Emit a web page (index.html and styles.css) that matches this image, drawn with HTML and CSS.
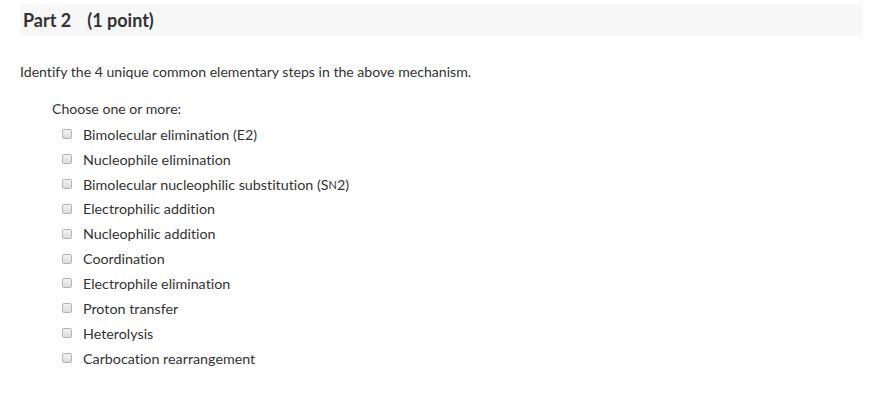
FILE: index.html
```html
<!DOCTYPE html>
<html>
<head>
<meta charset="utf-8">
<link rel="stylesheet" href="styles.css">
</head>
<body>
<div class="page">
  <div class="part-header"><span class="part">Part 2</span><span class="points">(1 point)</span></div>
  <p class="question">Identify the 4 unique common elementary steps in the above mechanism.</p>
  <div class="choices">
    <div class="prompt">Choose one or more:</div>
    <ul class="options">
      <li><span class="box"></span>Bimolecular elimination (E2)</li>
      <li><span class="box"></span>Nucleophile elimination</li>
      <li><span class="box"></span>Bimolecular nucleophilic substitution (S<span class="sc">N</span>2)</li>
      <li><span class="box"></span>Electrophilic addition</li>
      <li><span class="box"></span>Nucleophilic addition</li>
      <li><span class="box"></span>Coordination</li>
      <li><span class="box"></span>Electrophile elimination</li>
      <li><span class="box"></span>Proton transfer</li>
      <li><span class="box"></span>Heterolysis</li>
      <li><span class="box"></span>Carbocation rearrangement</li>
    </ul>
  </div>
</div>
</body>
</html>
```

FILE: styles.css
```css
html, body { margin: 0; padding: 0; background: #fff; }
body {
  font-family: Lato, "Open Sans", sans-serif;
  color: #333;
  font-variant-ligatures: none;
  font-feature-settings: "liga" 0;
}
.page { padding: 4px 12px 0 20px; }
.part-header {
  background: #f7f7f7;
  height: 32px;
  display: flex;
  align-items: center;
  padding-left: 3px;
  font-size: 18px;
  font-weight: bold;
  color: #333;
}
.points { margin-left: 16px; }
.question { margin: 27px 0 0 0; font-size: 14.1px; line-height: 18px; }
.choices { padding-left: 32px; margin-top: 19px; }
.prompt { font-size: 14.1px; line-height: 18px; }
.options { list-style: none; margin: 4px 0 0 0; padding: 0 0 0 10px; }
.options li {
  display: flex;
  align-items: center;
  height: 24.85px;
  font-size: 14.3px;
}
.box {
  width: 8px; height: 8px;
  border: 1px solid #b4b4b4;
  border-radius: 2px;
  background: linear-gradient(#f2f2f2, #dcdcdc);
  margin-right: 11px;
  flex: none;
}
.sc { font-size: 11px; }
```
